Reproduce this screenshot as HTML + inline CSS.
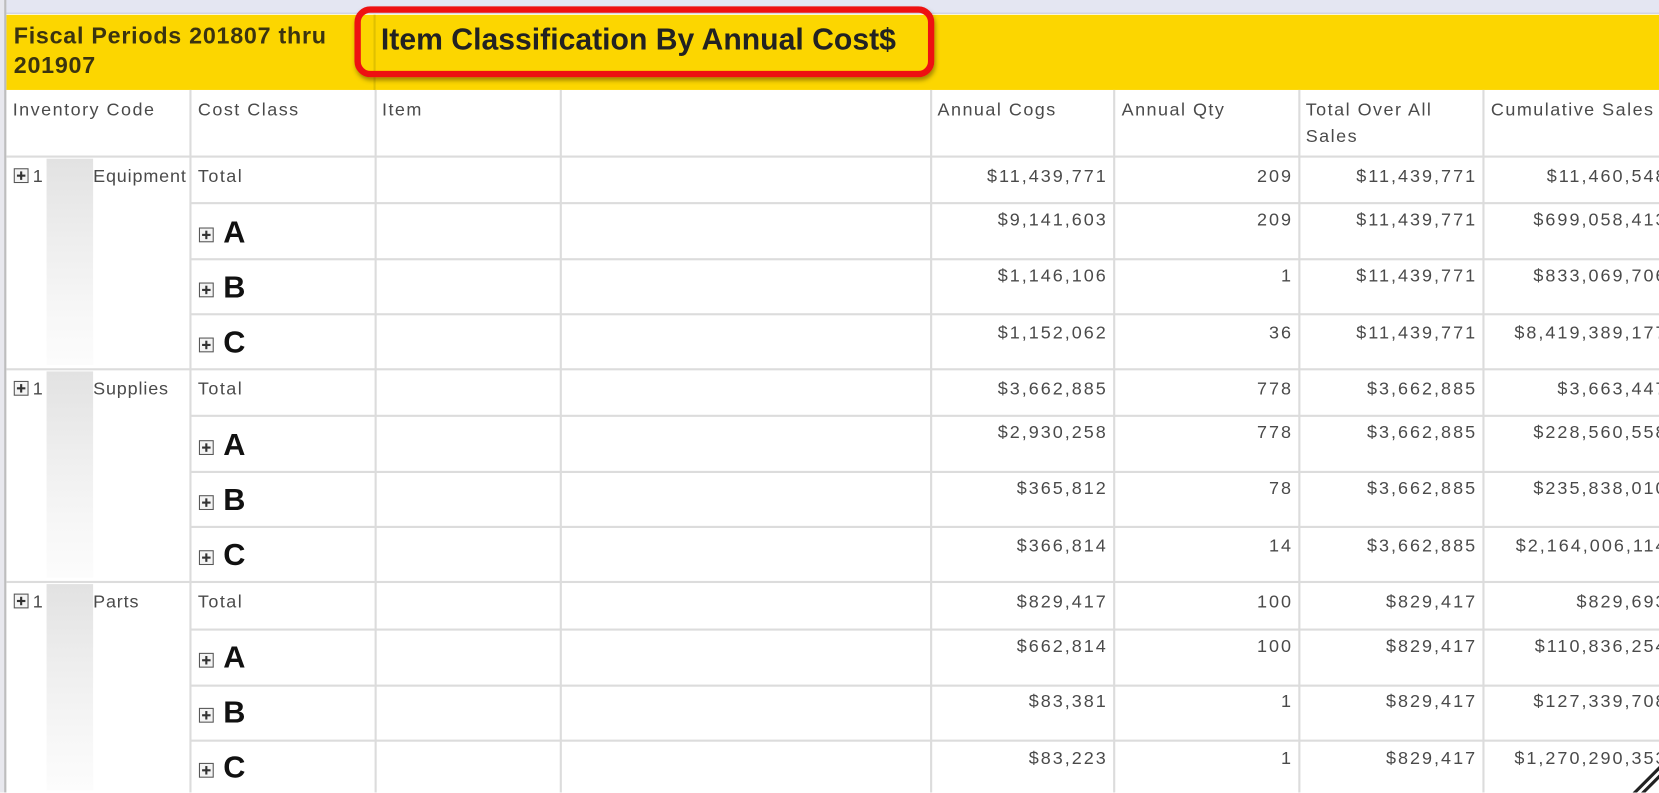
<!DOCTYPE html>
<html><head><meta charset="utf-8"><style>
*{margin:0;padding:0;box-sizing:border-box}
body{width:1659px;height:792px;overflow:hidden;background:#fff;position:relative;font-family:"Liberation Sans",Arial,sans-serif;color:#4a4a4a}
#w{position:absolute;left:0;top:0;width:1568px;height:749px;transform:scale(1.0581);transform-origin:0 0;overflow:hidden}
.a{position:absolute}
.vl{position:absolute;top:85px;bottom:0;width:2px;background:#dcdcdc}
.hl{position:absolute;height:2px;background:#dcdcdc}
.t{position:absolute;font-size:17px;letter-spacing:1.4px;line-height:20px;white-space:nowrap}
.r{text-align:right;letter-spacing:1.9px}
.pb{position:absolute;width:14px;height:14px;border:1.5px solid #555;background:#f4f4f4}
.pb:before{content:"";position:absolute;left:2px;right:2px;top:5px;height:1.5px;background:#333}
.pb:after{content:"";position:absolute;top:2px;bottom:2px;left:5px;width:1.5px;background:#333}
.L{position:absolute;font-size:29px;font-weight:bold;color:#111;line-height:30px}
.blur{position:absolute;left:44px;width:44px;background:linear-gradient(#e2e2e2,#eeeeee 40%,#f7f7f7 75%,#fcfcfc)}
</style></head><body><div id="w">
<div class="a" style="left:0;top:0;width:1568px;height:13px;background:#e4e6f2;border-bottom:1px solid #c8cadc"></div>
<div class="a" style="left:6px;top:14px;width:1562px;height:71px;background:#fcd600"></div>
<div class="a" style="left:0;top:0;width:6px;height:749px;background:#e8e8ee;border-right:2px solid #bdbdbd"></div>
<div class="a" style="left:13px;top:20px;font-size:22px;font-weight:bold;color:#3b3410;line-height:28px;letter-spacing:0.7px">Fiscal Periods 201807 thru<br>201907</div>
<div class="a" style="left:353px;top:14px;width:2px;height:71px;background:#e0c000"></div>
<div class="a" style="left:335px;top:6px;width:548px;height:67px;border:6px solid #ee1111;border-radius:15px;box-shadow:1px 3px 4px rgba(80,60,0,.5)"></div>
<div class="a" style="left:360px;top:23px;font-size:28.5px;font-weight:bold;color:#222;line-height:30px;letter-spacing:0px">Item Classification By Annual Cost$</div>

<div class="vl" style="left:179px"></div><div class="vl" style="left:354px"></div><div class="vl" style="left:529px"></div><div class="vl" style="left:879px"></div><div class="vl" style="left:1052px"></div><div class="vl" style="left:1227px"></div><div class="vl" style="left:1401px"></div>

<div class="hl" style="left:6px;right:0;top:147px"></div>
<div class="hl" style="left:6px;right:0;top:348px"></div>
<div class="hl" style="left:6px;right:0;top:549px"></div>
<div class="hl" style="left:180px;right:0;top:191px"></div><div class="hl" style="left:180px;right:0;top:244px"></div><div class="hl" style="left:180px;right:0;top:296px"></div>
<div class="hl" style="left:180px;right:0;top:392px"></div><div class="hl" style="left:180px;right:0;top:445px"></div><div class="hl" style="left:180px;right:0;top:497px"></div>
<div class="hl" style="left:180px;right:0;top:594px"></div><div class="hl" style="left:180px;right:0;top:647px"></div><div class="hl" style="left:180px;right:0;top:699px"></div>

<div class="t" style="left:12px;top:94px">Inventory Code</div>
<div class="t" style="left:187px;top:94px">Cost Class</div>
<div class="t" style="left:361px;top:94px">Item</div>
<div class="t" style="left:886px;top:94px">Annual Cogs</div>
<div class="t" style="left:1060px;top:94px">Annual Qty</div>
<div class="t" style="left:1234px;line-height:25px;top:91px">Total Over All<br>Sales</div>
<div class="t" style="left:1409px;top:94px">Cumulative Sales</div>

<div class="blur" style="top:150px;height:195px"></div>
<div class="blur" style="top:351px;height:195px"></div>
<div class="blur" style="top:552px;height:195px"></div>

<!-- group 1 -->
<div class="pb" style="left:13px;top:159px"></div><div class="t" style="left:31px;top:157px">1</div><div class="t" style="left:88px;top:157px;letter-spacing:0.8px">Equipment</div>
<div class="t" style="left:187px;top:157px">Total</div>
<div class="t r" style="right:521px;top:157px">$11,439,771</div><div class="t r" style="right:346px;top:157px">209</div><div class="t r" style="right:172px;top:157px">$11,439,771</div><div class="t r" style="right:-8px;top:157px">$11,460,548</div>
<div class="pb" style="left:188px;top:215px"></div><div class="L" style="left:211px;top:205px">A</div>
<div class="t r" style="right:521px;top:198px">$9,141,603</div><div class="t r" style="right:346px;top:198px">209</div><div class="t r" style="right:172px;top:198px">$11,439,771</div><div class="t r" style="right:-8px;top:198px">$699,058,413</div>
<div class="pb" style="left:188px;top:267px"></div><div class="L" style="left:211px;top:257px">B</div>
<div class="t r" style="right:521px;top:251px">$1,146,106</div><div class="t r" style="right:346px;top:251px">1</div><div class="t r" style="right:172px;top:251px">$11,439,771</div><div class="t r" style="right:-8px;top:251px">$833,069,706</div>
<div class="pb" style="left:188px;top:319px"></div><div class="L" style="left:211px;top:309px">C</div>
<div class="t r" style="right:521px;top:305px">$1,152,062</div><div class="t r" style="right:346px;top:305px">36</div><div class="t r" style="right:172px;top:305px">$11,439,771</div><div class="t r" style="right:-8px;top:305px">$8,419,389,177</div>

<!-- group 2 -->
<div class="pb" style="left:13px;top:360px"></div><div class="t" style="left:31px;top:358px">1</div><div class="t" style="left:88px;top:358px;letter-spacing:0.8px">Supplies</div>
<div class="t" style="left:187px;top:358px">Total</div>
<div class="t r" style="right:521px;top:358px">$3,662,885</div><div class="t r" style="right:346px;top:358px">778</div><div class="t r" style="right:172px;top:358px">$3,662,885</div><div class="t r" style="right:-8px;top:358px">$3,663,447</div>
<div class="pb" style="left:188px;top:416px"></div><div class="L" style="left:211px;top:406px">A</div>
<div class="t r" style="right:521px;top:399px">$2,930,258</div><div class="t r" style="right:346px;top:399px">778</div><div class="t r" style="right:172px;top:399px">$3,662,885</div><div class="t r" style="right:-8px;top:399px">$228,560,558</div>
<div class="pb" style="left:188px;top:468px"></div><div class="L" style="left:211px;top:458px">B</div>
<div class="t r" style="right:521px;top:452px">$365,812</div><div class="t r" style="right:346px;top:452px">78</div><div class="t r" style="right:172px;top:452px">$3,662,885</div><div class="t r" style="right:-8px;top:452px">$235,838,010</div>
<div class="pb" style="left:188px;top:520px"></div><div class="L" style="left:211px;top:510px">C</div>
<div class="t r" style="right:521px;top:506px">$366,814</div><div class="t r" style="right:346px;top:506px">14</div><div class="t r" style="right:172px;top:506px">$3,662,885</div><div class="t r" style="right:-8px;top:506px">$2,164,006,114</div>

<!-- group 3 -->
<div class="pb" style="left:13px;top:561px"></div><div class="t" style="left:31px;top:559px">1</div><div class="t" style="left:88px;top:559px;letter-spacing:0.8px">Parts</div>
<div class="t" style="left:187px;top:559px">Total</div>
<div class="t r" style="right:521px;top:559px">$829,417</div><div class="t r" style="right:346px;top:559px">100</div><div class="t r" style="right:172px;top:559px">$829,417</div><div class="t r" style="right:-8px;top:559px">$829,693</div>
<div class="pb" style="left:188px;top:617px"></div><div class="L" style="left:211px;top:607px">A</div>
<div class="t r" style="right:521px;top:601px">$662,814</div><div class="t r" style="right:346px;top:601px">100</div><div class="t r" style="right:172px;top:601px">$829,417</div><div class="t r" style="right:-8px;top:601px">$110,836,254</div>
<div class="pb" style="left:188px;top:669px"></div><div class="L" style="left:211px;top:659px">B</div>
<div class="t r" style="right:521px;top:653px">$83,381</div><div class="t r" style="right:346px;top:653px">1</div><div class="t r" style="right:172px;top:653px">$829,417</div><div class="t r" style="right:-8px;top:653px">$127,339,708</div>
<div class="pb" style="left:188px;top:721px"></div><div class="L" style="left:211px;top:711px">C</div>
<div class="t r" style="right:521px;top:707px">$83,223</div><div class="t r" style="right:346px;top:707px">1</div><div class="t r" style="right:172px;top:707px">$829,417</div><div class="t r" style="right:-8px;top:707px">$1,270,290,353</div>

<svg class="a" style="left:1540px;top:718px" width="30" height="32"><path d="M4 32 L30 6 M12 32 L30 14" stroke="#222" stroke-width="3"/></svg>
</div></body></html>
